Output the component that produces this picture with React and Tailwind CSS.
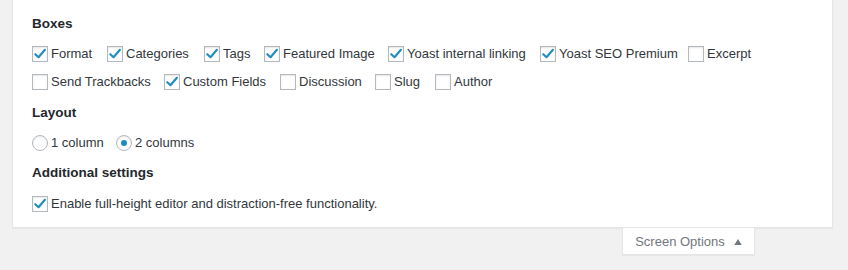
import React from "react";

const font = { fontFamily: '"Liberation Sans", Arial, sans-serif' };

function Check({ checked }) {
  return (
    <span className="relative inline-flex h-4 w-4 shrink-0 items-center justify-center border border-[#b4b9be] bg-white shadow-[inset_0_1px_2px_rgba(0,0,0,0.1)]">
      {checked && (
        <svg viewBox="0 0 16 16" className="h-[14px] w-[14px]">
          <path d="M2.6 8.2 L6.3 11.7 L13.6 3.2" fill="none" stroke="#1e8cbe" strokeWidth="2.4" strokeLinecap="round" strokeLinejoin="round" />
        </svg>
      )}
    </span>
  );
}

function Radio({ checked }) {
  return (
    <span className="inline-flex h-4 w-4 shrink-0 items-center justify-center rounded-full border border-[#b4b9be] bg-white shadow-[inset_0_1px_2px_rgba(0,0,0,0.1)]">
      {checked && <span className="h-[6px] w-[6px] rounded-full bg-[#1e8cbe]" />}
    </span>
  );
}

function Item({ label, checked, radio, w }) {
  return (
    <label className={`flex shrink-0 items-center gap-[3px] ${w}`}>
      {radio ? <Radio checked={checked} /> : <Check checked={checked} />}
      <span className="whitespace-nowrap text-[13px] text-[#32373c]">{label}</span>
    </label>
  );
}

function Heading({ children }) {
  return <div className="h-5 text-[13.5px] font-bold leading-5 text-[#23282d]">{children}</div>;
}

export default function App() {
  const row1 = [
    ["Format", true, "w-[75px]"],
    ["Categories", true, "w-[97px]"],
    ["Tags", true, "w-[60px]"],
    ["Featured Image", true, "w-[124px]"],
    ["Yoast internal linking", true, "w-[152px]"],
    ["Yoast SEO Premium", true, "w-[148px]"],
    ["Excerpt", false, "w-[80px]"],
  ];
  const row2 = [
    ["Send Trackbacks", false, "w-[132px]"],
    ["Custom Fields", true, "w-[116px]"],
    ["Discussion", false, "w-[95px]"],
    ["Slug", false, "w-[60px]"],
    ["Author", false, "w-[80px]"],
  ];
  return (
    <div className="h-[270px] w-[848px] bg-[#f1f1f1]" style={font}>
      <div className="ml-3 h-[228px] w-[821px] border border-t-0 border-[#e5e5e5] bg-white pl-[19px] pr-5 pt-[14px] shadow-[0_1px_1px_rgba(0,0,0,0.04)]">
        <Heading>Boxes</Heading>
        <div className="mt-[6px] flex h-7 items-center">
          {row1.map(([l, c, w]) => (
            <Item key={l} label={l} checked={c} w={w} />
          ))}
        </div>
        <div className="flex h-7 items-center">
          {row2.map(([l, c, w]) => (
            <Item key={l} label={l} checked={c} w={w} />
          ))}
        </div>
        <div className="mt-[7px]">
          <Heading>Layout</Heading>
        </div>
        <div className="mt-[6px] flex h-7 items-center">
          <Item label="1 column" radio checked={false} w="w-[84px]" />
          <Item label="2 columns" radio checked={true} w="w-[90px]" />
        </div>
        <div className="mt-[6px]">
          <Heading>Additional settings</Heading>
        </div>
        <div className="mt-[7px] flex h-7 items-center">
          <Item label="Enable full-height editor and distraction-free functionality." checked={true} w="w-[400px]" />
        </div>
      </div>
      <div className="flex w-[833px] justify-end pr-[78px]">
        <div className="flex h-[27px] w-[133px] items-center justify-center gap-[9px] border border-t-0 border-[#e5e5e5] bg-white pt-[2px] text-[13px] text-[#72777c] shadow-[0_1px_1px_rgba(0,0,0,0.04)]">
          <span>Screen Options</span>
          <svg viewBox="0 0 10 8" className="h-[6px] w-[8px]">
            <path d="M5 0 L10 8 L0 8 Z" fill="#72777c" />
          </svg>
        </div>
      </div>
    </div>
  );
}
